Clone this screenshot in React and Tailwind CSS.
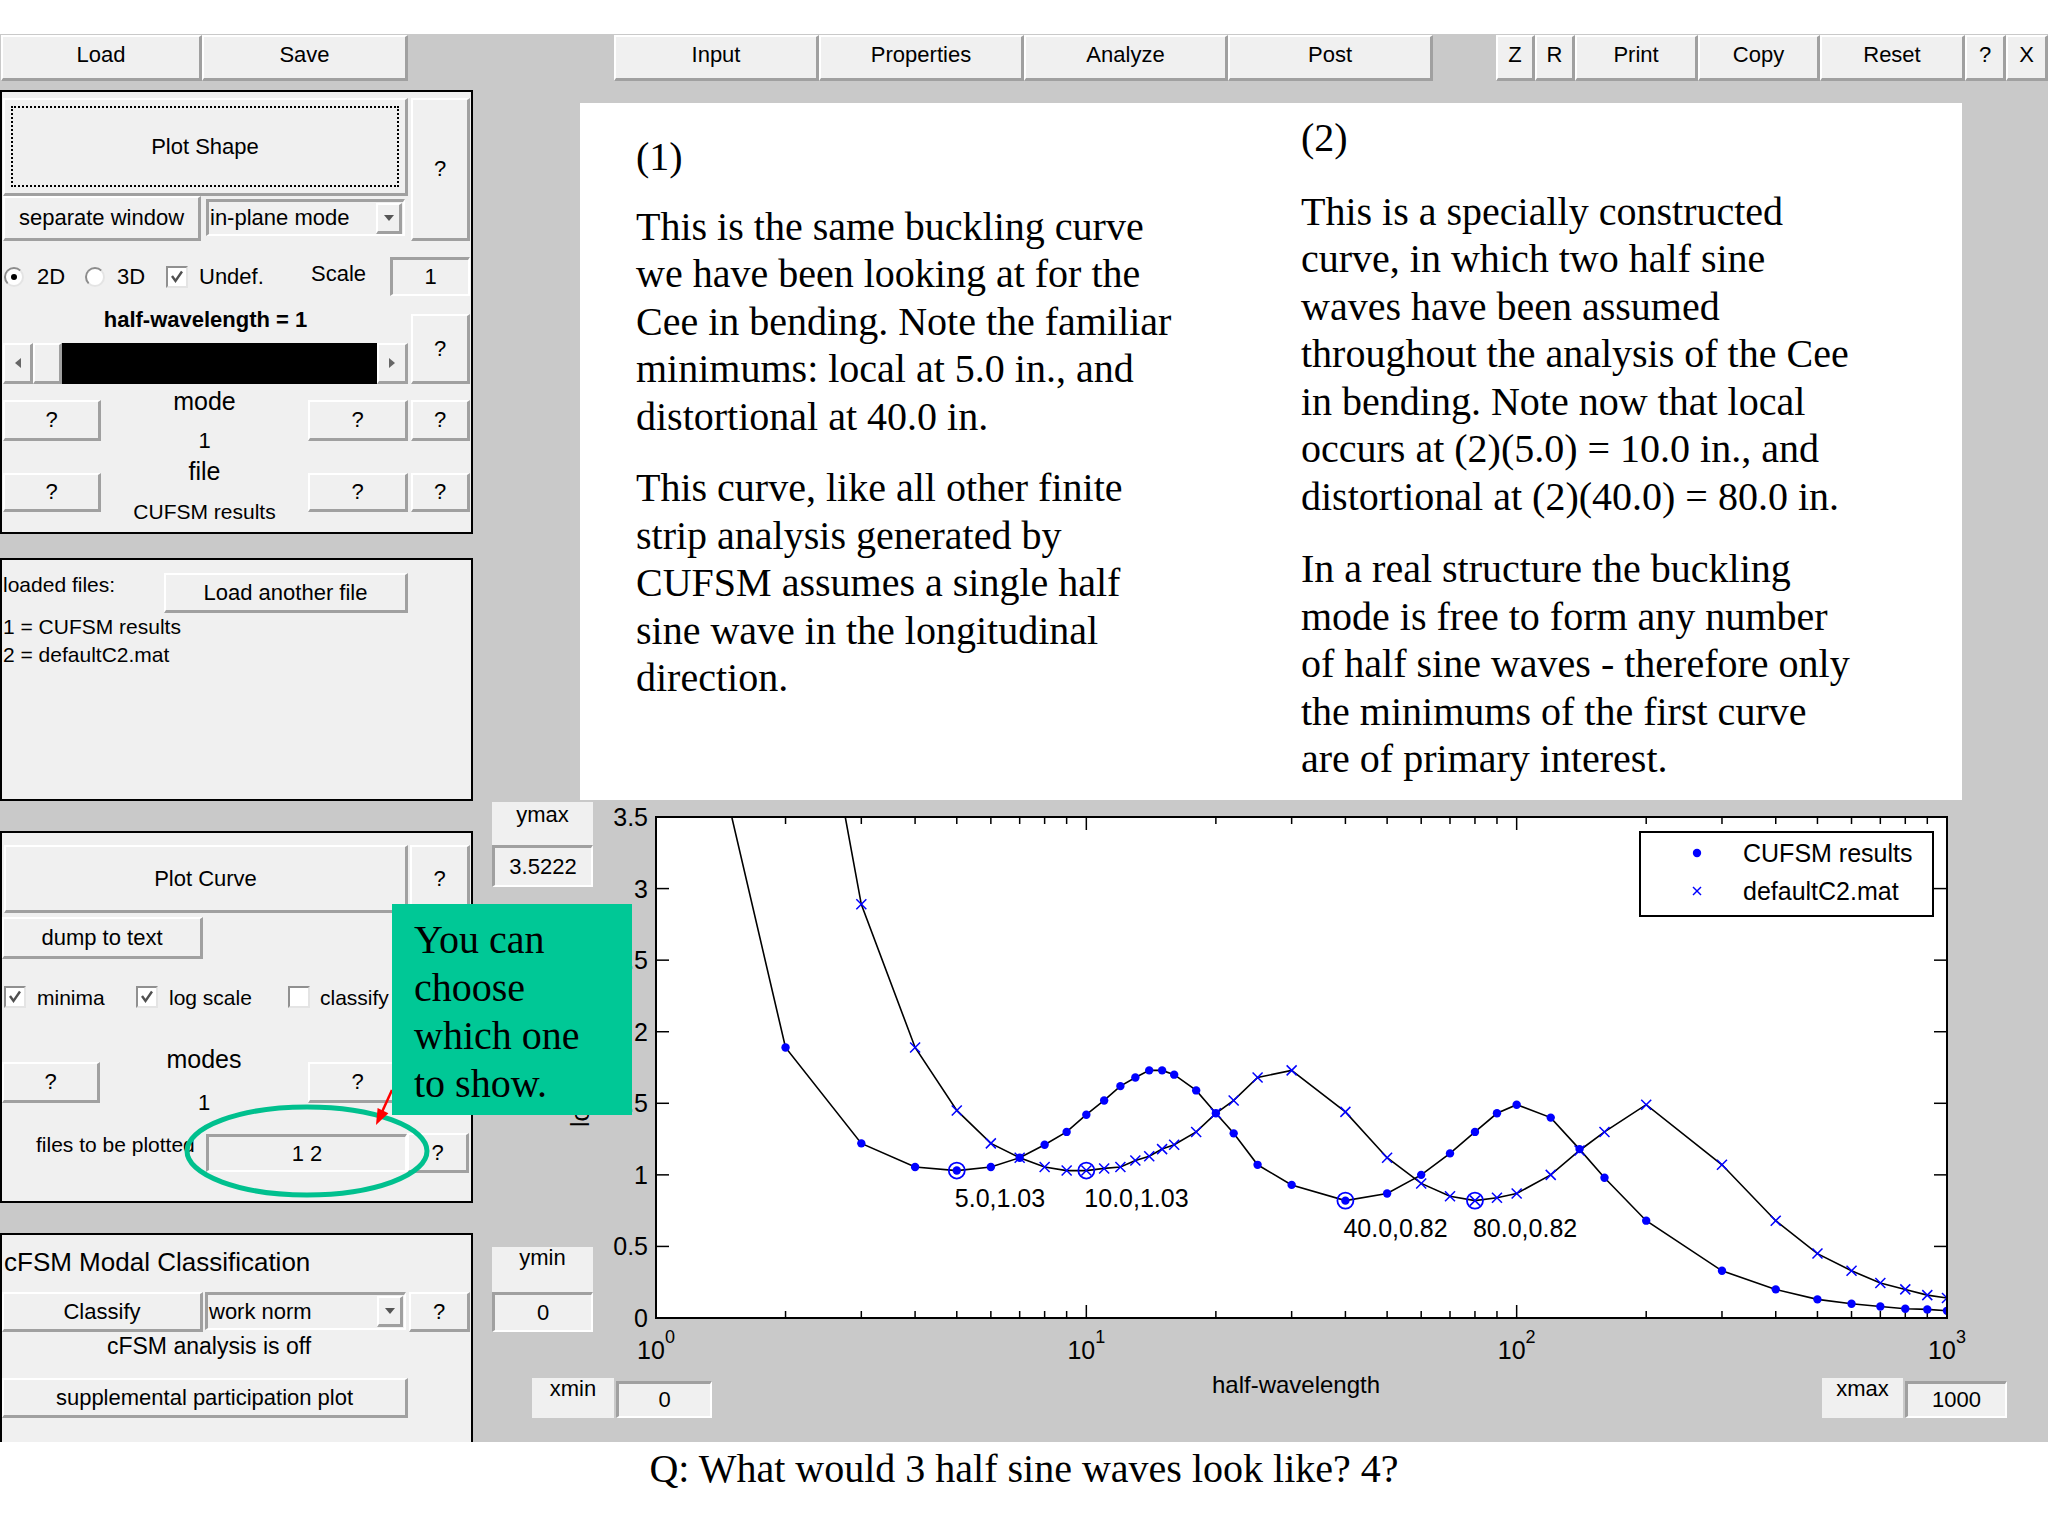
import React from "react";

const raised =
  "bg-[#f0f0f0] border-t-2 border-l-2 border-r-[3px] border-b-[3px] border-t-white border-l-white border-r-[#a0a0a0] border-b-[#a0a0a0]";
const sunken =
  "bg-[#f0f0f0] border-t-[3px] border-l-[3px] border-r-2 border-b-2 border-t-[#a0a0a0] border-l-[#a0a0a0] border-r-white border-b-white";

function Btn({ className = "", children }) {
  return (
    <div className={`${raised} flex shrink-0 items-center justify-center text-[22px] leading-none ${className}`}>
      {children}
    </div>
  );
}

function Edit({ className = "", children }) {
  return (
    <div className={`${sunken} flex shrink-0 items-center justify-center text-[22px] leading-none ${className}`}>
      {children}
    </div>
  );
}

function Popup({ className = "", label }) {
  return (
    <div className={`${sunken} flex shrink-0 items-center pl-[1px] text-[22px] leading-none ${className}`}>
      <span className="flex-1 whitespace-nowrap">{label}</span>
      <div className={`${raised} mr-[1px] flex h-[31px] w-[26px] items-center justify-center`}>
        <svg width="10" height="6" viewBox="0 0 10 6">
          <path d="M0 0 L10 0 L5 6 Z" fill="#555" />
        </svg>
      </div>
    </div>
  );
}

function Check({ on }) {
  return (
    <div className="flex h-[22px] w-[22px] items-center justify-center border-2 border-t-[#909090] border-l-[#909090] border-r-[#e4e4e4] border-b-[#e4e4e4] bg-white">
      {on && (
        <svg width="14" height="14" viewBox="0 0 14 14">
          <path d="M2 6 L5.5 11 L12 1.5" fill="none" stroke="#505050" strokeWidth="2.4" />
        </svg>
      )}
    </div>
  );
}

function Radio({ on }) {
  return (
    <div className="flex h-[20px] w-[20px] items-center justify-center rounded-full border-2 border-t-[#8c8c8c] border-l-[#8c8c8c] border-r-[#e4e4e4] border-b-[#e4e4e4] bg-white">
      {on && <div className="h-[6px] w-[6px] rounded-full bg-black" />}
    </div>
  );
}

function Arrow({ dir }) {
  return (
    <svg width="6" height="10" viewBox="0 0 6 10">
      {dir === "left" ? <path d="M6 0 L6 10 L0 5 Z" fill="#666" /> : <path d="M0 0 L0 10 L6 5 Z" fill="#666" />}
    </svg>
  );
}

function Toolbar() {
  return (
    <div className="flex h-[48px] pt-[1px]">
      <Btn className="ml-[1px] h-[46px] w-[201px] pb-[5px]">Load</Btn>
      <Btn className="h-[46px] w-[206px] pb-[5px]">Save</Btn>
      <Btn className="ml-[206px] h-[46px] w-[205px] pb-[5px]">Input</Btn>
      <Btn className="h-[46px] w-[205px] pb-[5px]">Properties</Btn>
      <Btn className="h-[46px] w-[204px] pb-[5px]">Analyze</Btn>
      <Btn className="h-[46px] w-[205px] pb-[5px]">Post</Btn>
      <Btn className="ml-[63px] h-[46px] w-[39px] pb-[5px]">Z</Btn>
      <Btn className="h-[46px] w-[40px] pb-[5px]">R</Btn>
      <Btn className="h-[46px] w-[123px] pb-[5px]">Print</Btn>
      <Btn className="h-[46px] w-[122px] pb-[5px]">Copy</Btn>
      <Btn className="h-[46px] w-[145px] pb-[5px]">Reset</Btn>
      <Btn className="h-[46px] w-[41px] pb-[5px]">?</Btn>
      <Btn className="h-[46px] w-[42px] pb-[5px]">X</Btn>
    </div>
  );
}

function ShapePanel() {
  return (
    <div className="mt-[8px] h-[444px] border-2 border-black bg-[#f0f0f0]">
      <div className="mt-[6px] flex pl-[1px]">
        <div className="flex w-[405px] flex-col">
          <Btn className="h-[98px] w-full">
            <div className="m-[6px] flex flex-1 items-center justify-center self-stretch border-2 border-dotted border-black">
              Plot Shape
            </div>
          </Btn>
          <div className="flex h-[45px]">
            <Btn className="h-[45px] w-[198px] whitespace-nowrap">separate window</Btn>
            <Popup className="ml-[5px] mt-[3px] h-[37px] w-[199px]" label="in-plane mode" />
          </div>
        </div>
        <Btn className="ml-[3px] h-[143px] w-[59px]">?</Btn>
      </div>

      <div className="mt-[16px] flex h-[39px] items-center text-[22px] leading-none">
        <div className="w-[35px] pl-[2px]"><Radio on /></div>
        <div className="w-[48px]">2D</div>
        <div className="w-[32px]"><Radio /></div>
        <div className="w-[49px]">3D</div>
        <div className="w-[33px]"><Check on /></div>
        <div className="w-[112px]">Undef.</div>
        <div className="mb-[6px] w-[79px]">Scale</div>
        <Edit className="h-[39px] w-[80px]">1</Edit>
      </div>

      <div className="flex h-[88px]">
        <div className="ml-[1px] flex w-[405px] flex-col">
          <div className="flex h-[47px] items-center justify-center text-[22px] font-bold">half-wavelength = 1</div>
          <div className="flex h-[41px]">
            <Btn className="h-[41px] w-[30px]"><Arrow dir="left" /></Btn>
            <div className={`${raised} h-[41px] w-[29px]`} />
            <div className="h-[41px] flex-1 bg-black" />
            <Btn className="h-[41px] w-[31px]"><Arrow dir="right" /></Btn>
          </div>
        </div>
        <Btn className="ml-[3px] mt-[18px] h-[70px] w-[59px]">?</Btn>
      </div>

      <div className="flex">
        <div className="ml-[1px] w-[98px]">
          <Btn className="mt-[16px] h-[41px] w-full">?</Btn>
          <Btn className="mt-[32px] h-[39px] w-full">?</Btn>
        </div>
        <div className="flex w-[207px] flex-col items-center">
          <div className="flex h-[36px] items-center text-[25px]">mode</div>
          <div className="flex h-[40px] items-center text-[22px]">1</div>
          <div className="flex h-[24px] items-center text-[25px]">file</div>
          <div className="mt-[14px] flex h-[28px] items-center text-[21px]">CUFSM results</div>
        </div>
        <div className="w-[100px]">
          <Btn className="mt-[16px] h-[41px] w-full">?</Btn>
          <Btn className="mt-[32px] h-[39px] w-full">?</Btn>
        </div>
        <div className="ml-[3px] w-[59px]">
          <Btn className="mt-[16px] h-[41px] w-full">?</Btn>
          <Btn className="mt-[32px] h-[39px] w-full">?</Btn>
        </div>
      </div>
    </div>
  );
}

function FilesPanel() {
  return (
    <div className="mt-[24px] h-[243px] border-2 border-black bg-[#f0f0f0] text-[21px]">
      <div className="mt-[13px] flex h-[40px]">
        <div className="w-[162px] pl-[1px] leading-[24px]">loaded files:</div>
        <Btn className="h-[40px] w-[244px]">Load another file</Btn>
      </div>
      <div className="pl-[1px] leading-[28px]">1 = CUFSM results</div>
      <div className="pl-[1px] leading-[28px]">2 = defaultC2.mat</div>
    </div>
  );
}

function CurvePanel() {
  return (
    <div className="mt-[30px] h-[372px] border-2 border-black bg-[#f0f0f0]">
      <div className="mt-[12px] flex">
        <Btn className="ml-[2px] h-[68px] w-[404px]">Plot Curve</Btn>
        <Btn className="ml-[2px] h-[68px] w-[60px]">?</Btn>
      </div>
      <Btn className="mt-[4px] h-[42px] w-[201px]">dump to text</Btn>
      <div className="mt-[19px] flex h-[38px] items-center text-[21px] leading-none">
        <div className="w-[35px] pl-[2px]"><Check on /></div>
        <div className="w-[99px]">minima</div>
        <div className="w-[33px]"><Check on /></div>
        <div className="w-[119px]">log scale</div>
        <div className="w-[32px]"><Check /></div>
        <div>classify</div>
      </div>
      <div className="flex">
        <div className="w-[98px]">
          <Btn className="mt-[46px] h-[41px] w-full">?</Btn>
        </div>
        <div className="flex w-[208px] flex-col items-center">
          <div className="mt-[30px] flex h-[28px] items-center text-[25px]">modes</div>
          <div className="mt-[14px] flex h-[28px] items-center text-[22px]">1</div>
        </div>
        <div className="w-[100px]">
          <Btn className="mt-[46px] h-[41px] w-full">?</Btn>
        </div>
      </div>
      <div className="mt-[17px] flex items-start">
        <div className="w-[204px] whitespace-nowrap pl-[34px] pt-[1px] text-[21px] leading-[22px]">files to be plotted</div>
        <Edit className="mt-[1px] h-[38px] w-[201px]">1 2</Edit>
        <Btn className="h-[40px] w-[62px]">?</Btn>
      </div>
    </div>
  );
}

function ClassPanel() {
  return (
    <div className="mt-[30px] flex-1 border-l-2 border-r-2 border-t-2 border-black bg-[#f0f0f0]">
      <div className="mt-[7px] h-[40px] whitespace-nowrap pl-[2px] text-[26px] leading-[40px]">cFSM Modal Classification</div>
      <div className="mt-[10px] flex h-[40px]">
        <Btn className="h-[40px] w-[201px]">Classify</Btn>
        <Popup className="ml-[2px] h-[38px] w-[201px]" label="work norm" />
        <Btn className="ml-[3px] h-[40px] w-[61px]">?</Btn>
      </div>
      <div className="h-[28px] w-[414px] text-center text-[23px] leading-[28px]">cFSM analysis is off</div>
      <Btn className="mt-[18px] h-[40px] w-[406px]">supplemental participation plot</Btn>
    </div>
  );
}

function TextPanel() {
  return (
    <div className="ml-[107px] mt-[21px] flex h-[697px] w-[1382px] bg-white font-['Liberation_Serif','Times_New_Roman',serif] text-[40px] leading-[47.5px] whitespace-nowrap">
      <div className="w-[721px] pl-[56px] pt-[30px]">
        <p>(1)</p>
        <p className="mt-[22px]">
          This is the same buckling curve<br />
          we have been looking at for the<br />
          Cee in bending. Note the familiar<br />
          minimums: local at 5.0 in., and<br />
          distortional at 40.0 in.
        </p>
        <p className="mt-[24px]">
          This curve, like all other finite<br />
          strip analysis generated by<br />
          CUFSM assumes a single half<br />
          sine wave in the longitudinal<br />
          direction.
        </p>
      </div>
      <div className="pt-[11px]">
        <p>(2)</p>
        <p className="mt-[26px]">
          This is a specially constructed<br />
          curve, in which two half sine<br />
          waves have been assumed<br />
          throughout the analysis of the Cee<br />
          in bending. Note now that local<br />
          occurs at (2)(5.0) = 10.0 in., and<br />
          distortional at (2)(40.0) = 80.0 in.
        </p>
        <p className="mt-[25px]">
          In a real structure the buckling<br />
          mode is free to form any number<br />
          of half sine waves - therefore only<br />
          the minimums of the first curve<br />
          are of primary interest.
        </p>
      </div>
    </div>
  );
}

const curve1 = [
  [1, 5.77], [2, 1.89], [3, 1.22], [4, 1.055], [5, 1.03], [6, 1.055], [7, 1.12], [8, 1.21],
  [9, 1.3], [10, 1.42], [11, 1.52], [12, 1.62], [13, 1.68], [14, 1.73], [15, 1.73], [16, 1.7],
  [18, 1.59], [20, 1.43], [22, 1.29], [25, 1.07], [30, 0.93], [40, 0.82], [50, 0.87], [60, 1.0],
  [70, 1.15], [80, 1.3], [90, 1.43], [100, 1.49], [120, 1.4], [140, 1.18], [160, 0.98], [200, 0.68],
  [300, 0.33], [400, 0.2], [500, 0.13], [600, 0.1], [700, 0.08], [800, 0.065], [900, 0.06], [1000, 0.05],
];

const curve2 = [
  [2, 5.77], [3, 2.89], [4, 1.89], [5, 1.45], [6, 1.22], [7, 1.12], [8, 1.055], [9, 1.03],
  [10, 1.03], [11, 1.045], [12, 1.055], [13, 1.1], [14, 1.13], [15, 1.18], [16, 1.21], [18, 1.3],
  [20, 1.43], [22, 1.52], [25, 1.68], [30, 1.73], [40, 1.44], [50, 1.12], [60, 0.94], [70, 0.85],
  [80, 0.82], [90, 0.84], [100, 0.87], [120, 1.0], [140, 1.17], [160, 1.3], [200, 1.49], [300, 1.07],
  [400, 0.68], [500, 0.45], [600, 0.33], [700, 0.245], [800, 0.2], [900, 0.16], [1000, 0.14],
];

function Plot() {
  const X = (v) => 656 + Math.log10(v) * 430.33;
  const Y = (v) => 1318 - v * 143.14;
  const pts = (d) => d.map(([x, y]) => `${X(x).toFixed(1)},${Y(y).toFixed(1)}`).join(" ");
  const yTicks = [0, 0.5, 1, 1.5, 2, 2.5, 3, 3.5];
  const minor = [];
  for (let d = 0; d < 3; d++) for (let m = 2; m <= 9; m++) minor.push(X(m * 10 ** d));
  const major = [X(10), X(100)];
  const blue = "#0000ff";
  const mins = [[5, 1.03, "5.0,1.03"], [10, 1.03, "10.0,1.03"], [40, 0.82, "40.0,0.82"], [80, 0.82, "80.0,0.82"]];

  return (
    <svg
      className="absolute inset-0"
      width="1575"
      height="642"
      viewBox="473 800 1575 642"
      fontFamily="Liberation Sans, Arial, sans-serif"
    >
      <defs>
        <clipPath id="axclip">
          <rect x="656" y="817" width="1291" height="501" />
        </clipPath>
      </defs>
      <rect x="656" y="817" width="1291" height="501" fill="#fff" />

      <g stroke="#000" strokeWidth="1.5">
        {yTicks.map((v) => (
          <g key={v}>
            <line x1="656" y1={Y(v)} x2="669" y2={Y(v)} />
            <line x1="1947" y1={Y(v)} x2="1934" y2={Y(v)} />
          </g>
        ))}
        {minor.map((x, i) => (
          <g key={i}>
            <line x1={x} y1="1318" x2={x} y2="1311" />
            <line x1={x} y1="817" x2={x} y2="824" />
          </g>
        ))}
        {major.map((x, i) => (
          <g key={i}>
            <line x1={x} y1="1318" x2={x} y2="1305" />
            <line x1={x} y1="817" x2={x} y2="830" />
          </g>
        ))}
      </g>

      <g clipPath="url(#axclip)">
        <polyline points={pts(curve1)} fill="none" stroke="#000" strokeWidth="1.6" />
        <polyline points={pts(curve2)} fill="none" stroke="#000" strokeWidth="1.6" />
        {curve1.map(([x, y]) => (
          <circle key={x} cx={X(x)} cy={Y(y)} r="4.2" fill={blue} />
        ))}
        {curve2.map(([x, y]) => (
          <g key={x} stroke={blue} strokeWidth="1.5">
            <line x1={X(x) - 5} y1={Y(y) - 5} x2={X(x) + 5} y2={Y(y) + 5} />
            <line x1={X(x) - 5} y1={Y(y) + 5} x2={X(x) + 5} y2={Y(y) - 5} />
          </g>
        ))}
        {mins.map(([x, y]) => (
          <circle key={x} cx={X(x)} cy={Y(y)} r="8" fill="none" stroke={blue} strokeWidth="1.8" />
        ))}
      </g>

      <g fontSize="25" fill="#000">
        {mins.map(([x, y, t]) => (
          <text key={t} x={X(x) - 2} y={Y(y) + 36}>{t}</text>
        ))}
      </g>

      <rect x="1640" y="832" width="293" height="84" fill="#fff" stroke="#000" strokeWidth="2" />
      <circle cx="1697" cy="853" r="4.2" fill={blue} />
      <g stroke={blue} strokeWidth="1.5">
        <line x1="1693" y1="887" x2="1701" y2="895" />
        <line x1="1693" y1="895" x2="1701" y2="887" />
      </g>
      <text x="1743" y="862" fontSize="25">CUFSM results</text>
      <text x="1743" y="900" fontSize="25">defaultC2.mat</text>

      <rect x="656" y="817" width="1291" height="501" fill="none" stroke="#000" strokeWidth="2" />

      <g fontSize="25" fill="#000">
        {yTicks.map((v) => (
          <text key={v} x="648" y={Y(v) + 9} textAnchor="end">{v}</text>
        ))}
        {[0, 1, 2, 3].map((d) => (
          <text key={d} x={656 + d * 430.33} y="1359" textAnchor="middle">
            10<tspan dy="-16" fontSize="18">{d}</tspan>
          </text>
        ))}
        <text x="1296" y="1393" textAnchor="middle" fontSize="24">half-wavelength</text>
        <text x="589" y="1127" fontSize="25" transform="rotate(-90 589 1127)">load factor</text>
      </g>
    </svg>
  );
}

function PlotRegion() {
  return (
    <div className="relative h-[642px]">
      <Plot />
      <div className="relative pt-[2px] text-[22px] leading-none">
        <div className="ml-[19px] w-[101px]">
          <div className="h-[43px] bg-[#f0f0f0] pt-[2px] text-center leading-[22px]">ymax</div>
          <Edit className="h-[42px] w-full">3.5222</Edit>
        </div>
        <div className="ml-[19px] mt-[360px] w-[101px]">
          <div className="h-[45px] bg-[#f0f0f0] text-center leading-[22px]">ymin</div>
          <Edit className="h-[40px] w-full">0</Edit>
        </div>
        <div className="mt-[46px] flex">
          <div className="ml-[59px] h-[40px] w-[82px] bg-[#f0f0f0] text-center leading-[22px]">xmin</div>
          <Edit className="ml-[2px] mt-[3px] h-[37px] w-[96px]">0</Edit>
          <div className="ml-[1110px] h-[40px] w-[81px] bg-[#f0f0f0] text-center leading-[22px]">xmax</div>
          <Edit className="ml-[2px] mt-[3px] h-[37px] w-[102px]">1000</Edit>
        </div>
      </div>
    </div>
  );
}

function Callout() {
  return (
    <>
      <svg className="absolute left-[170px] top-[1046px]" width="270" height="130" viewBox="170 1080 270 130">
        <ellipse cx="307" cy="1151" rx="120" ry="44" fill="none" stroke="#00c08e" strokeWidth="5" />
        <line x1="392" y1="1090" x2="382" y2="1112" stroke="#ff0000" strokeWidth="2.5" />
        <polygon points="376,1125 388.4,1113.2 377.6,1108" fill="#ff0000" />
      </svg>
      <div className="absolute left-[392px] top-[870px] h-[211px] w-[240px] bg-[#00c896] pl-[22px] pt-[12px] font-['Liberation_Serif','Times_New_Roman',serif] text-[40px] leading-[48px] whitespace-nowrap">
        You can<br />
        choose<br />
        which one<br />
        to show.
      </div>
    </>
  );
}

export default function App() {
  return (
    <div className="h-[1536px] w-[2048px] overflow-hidden bg-white font-['Liberation_Sans',Arial,sans-serif] text-black">
      <div className="h-[34px]" />
      <div className="relative h-[1408px] bg-[#c9c9c9]">
        <Toolbar />
        <div className="flex h-[1360px]">
          <div className="flex w-[473px] shrink-0 flex-col">
            <ShapePanel />
            <FilesPanel />
            <CurvePanel />
            <ClassPanel />
          </div>
          <div className="flex w-[1575px] flex-col">
            <TextPanel />
            <PlotRegion />
          </div>
        </div>
        <Callout />
      </div>
      <div className="h-[94px] pt-[3px] text-center font-['Liberation_Serif','Times_New_Roman',serif] text-[40px] leading-[48px]">
        Q: What would 3 half sine waves look like? 4?
      </div>
    </div>
  );
}
